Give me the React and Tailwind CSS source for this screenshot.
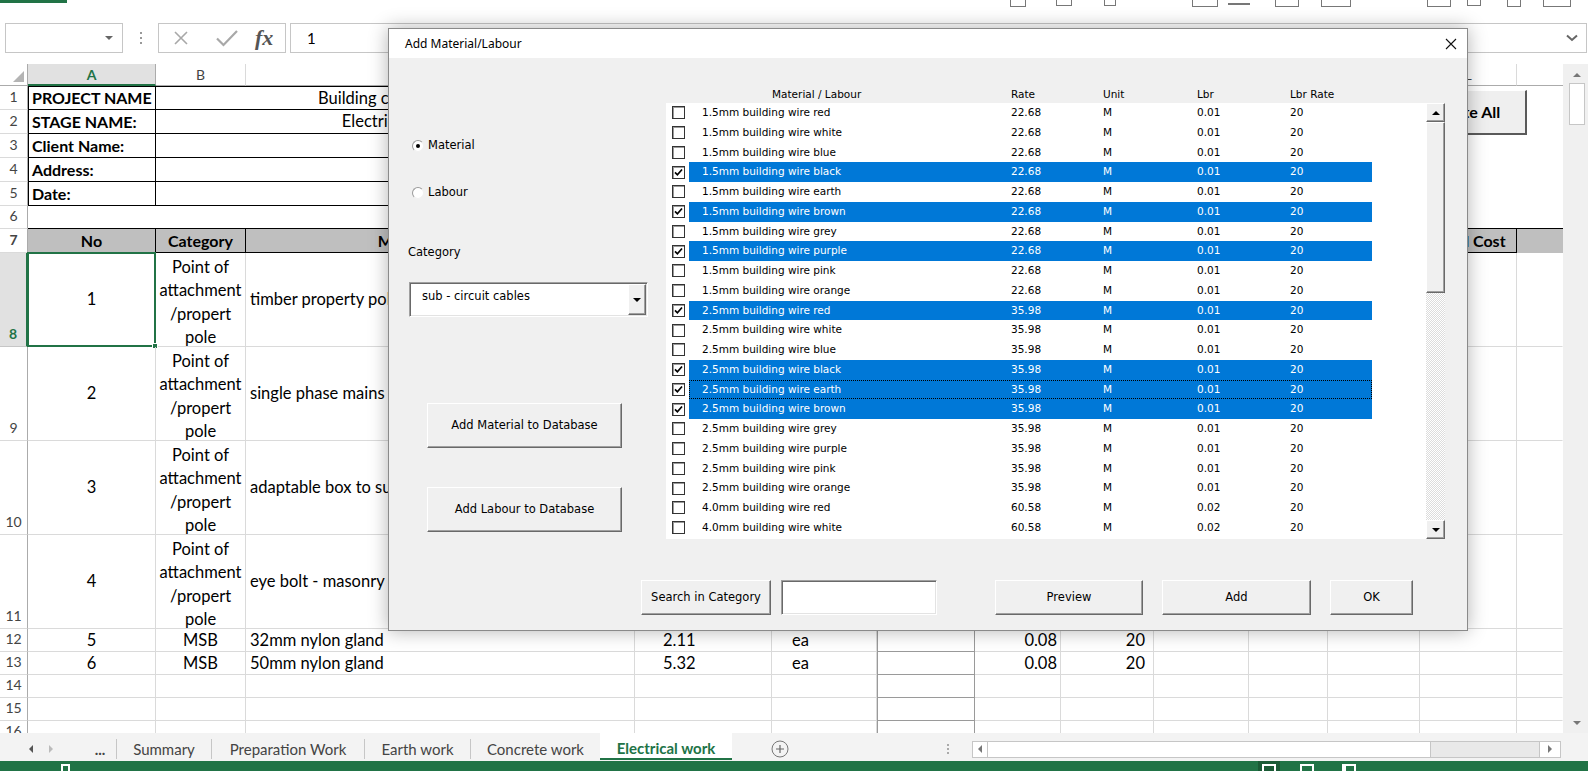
import React from "react";

// column widths of the sheet (row header, A..M)
const W = {
  hdr: "w-[28px]",
  A: "w-[128px]",
  B: "w-[90px]",
  C: "w-[389px]",
  D: "w-[137px]",
  E: "w-[105px]",
  F: "w-[98px]",
  G: "w-[86px]",
  H: "w-[93px]",
  I: "w-[95px]",
  J: "w-[79px]",
  K: "w-[92px]",
  L: "w-[97px]",
  M: "w-[46px]",
};
const TAIL = ["D", "E", "F", "G", "H", "I", "J", "K", "L", "M"];
const GRID = "border-[#dadada]";

const RAISED =
  "bg-[#f0f0f0] border border-t-white border-l-white border-r-[#696969] border-b-[#696969] shadow-[inset_-1px_-1px_0_#a0a0a0]";
const SUNKEN =
  "bg-white border border-t-[#a0a0a0] border-l-[#a0a0a0] border-r-white border-b-white shadow-[inset_1px_1px_0_#696969,inset_-1px_-1px_0_#e3e3e3]";

const TriDown = ({ c = "border-t-black" }) => (
  <span className={`h-0 w-0 border-l-[4px] border-r-[4px] border-t-[4px] border-l-transparent border-r-transparent ${c}`} />
);
const TriUp = ({ c = "border-b-black" }) => (
  <span className={`h-0 w-0 border-l-[4px] border-r-[4px] border-b-[4px] border-l-transparent border-r-transparent ${c}`} />
);
const TriLeft = ({ c = "border-r-[#666]" }) => (
  <span className={`h-0 w-0 border-t-[4px] border-b-[4px] border-r-[4px] border-t-transparent border-b-transparent ${c}`} />
);
const TriRight = ({ c = "border-l-[#666]" }) => (
  <span className={`h-0 w-0 border-t-[4px] border-b-[4px] border-l-[4px] border-t-transparent border-b-transparent ${c}`} />
);

function RH({ n, active }) {
  if (active)
    return (
      <div className="flex w-[28px] shrink-0 items-end justify-center border-r-2 border-b border-r-[#217346] border-b-[#c6c6c6] bg-[#e1e1e1] pb-[2px] text-[14px] font-bold text-[#217346]">
        {n}
      </div>
    );
  return (
    <div className="flex w-[28px] shrink-0 items-end justify-center border-r border-b border-r-[#ababab] border-b-[#dadada] bg-white pb-[2px] text-[14px] text-[#444]">
      {n}
    </div>
  );
}

function C({ w, b = GRID, cls = "", children }) {
  return <div className={`${w} shrink-0 border-r border-b ${b} ${cls}`}>{children}</div>;
}

const TOP = [
  ["1", "PROJECT NAME", "Building construction"],
  ["2", "STAGE NAME:", "Electrical work"],
  ["3", "Client Name:", ""],
  ["4", "Address:", ""],
  ["5", "Date:", ""],
];
const BIG = [
  ["8", "1", "timber property pole"],
  ["9", "2", "single phase mains connection"],
  ["10", "3", "adaptable box to suit"],
  ["11", "4", "eye bolt - masonry"],
];
const SMALL = [
  ["12", "5", "MSB", "32mm nylon gland", "2.11", "ea", "0.08", "20"],
  ["13", "6", "MSB", "50mm nylon gland", "5.32", "ea", "0.08", "20"],
  ["14"],
  ["15"],
  ["16"],
];

function Sheet() {
  return (
    <div className="relative flex w-[1563px] shrink-0 flex-col overflow-hidden text-[16.5px]">
      {/* column letters */}
      <div className="flex h-[22px] shrink-0 text-[14px] text-[#444]">
        <div className="relative w-[28px] shrink-0 border-r border-b border-[#ababab] bg-white">
          <span className="absolute right-[3px] bottom-[3px] h-0 w-0 border-b-[11px] border-l-[11px] border-b-[#b4b4b4] border-l-transparent" />
        </div>
        <div className="flex w-[128px] shrink-0 items-center justify-center border-r border-b-2 border-r-[#ababab] border-b-[#217346] bg-[#e1e1e1] font-bold text-[#217346]">
          A
        </div>
        <div className="flex w-[90px] shrink-0 items-center justify-center border-r border-b border-r-[#dadada] border-b-[#ababab]">B</div>
        <div className="flex w-[389px] shrink-0 items-center justify-center border-r border-b border-r-[#dadada] border-b-[#ababab]">C</div>
        {TAIL.map((k) => (
          <div
            key={k}
            className={`${W[k]} flex shrink-0 items-center justify-center border-b border-b-[#ababab] ${k === "M" ? "" : "border-r border-r-[#dadada]"}`}
          >
            {k === "M" ? "" : k}
          </div>
        ))}
      </div>

      {TOP.map(([n, label, val], i) => (
        <div key={n} className="flex h-[24px] shrink-0">
          <RH n={n} />
          <C w={W.A} b="border-black" cls={`flex items-center border-l pl-[3px] text-[16px] font-bold ${i === 0 ? "border-t" : ""}`}>
            {label}
          </C>
          <C w="w-[479px]" b="border-black" cls={`flex items-center justify-center whitespace-nowrap ${i === 0 ? "border-t" : ""}`}>
            {val}
          </C>
          <div className="flex-1" />
        </div>
      ))}

      <div className="flex h-[23px] shrink-0">
        <RH n="6" />
        <div className="flex-1 border-b border-black" />
      </div>

      <div className="flex h-[24px] shrink-0 text-[16px] font-bold">
        <RH n="7" />
        <C w={W.A} b="border-black" cls="flex items-center justify-center bg-[#bfbfbf]">No</C>
        <C w={W.B} b="border-black" cls="flex items-center justify-center bg-[#bfbfbf]">Category</C>
        <C w={W.C} b="border-black" cls="flex items-center justify-center bg-[#bfbfbf]">Material / Labour</C>
        {TAIL.map((k) => (
          <C
            key={k}
            w={W[k]}
            b={k === "M" ? "border-transparent" : "border-black"}
            cls={`flex items-center justify-center whitespace-nowrap bg-[#bfbfbf] ${k === "L" ? "pl-[4px]" : ""}`}
          >
            {k === "L" ? "Total Cost" : ""}
          </C>
        ))}
      </div>

      {BIG.map(([n, no, desc], i) => (
        <div key={n} className="flex h-[94px] shrink-0">
          <RH n={n} active={i === 0} />
          <C w={W.A} cls="relative flex items-center justify-center">
            {no}
            {i === 0 && (
              <div className="absolute -top-[1px] -left-[1px] h-[95px] w-[129px] border-2 border-[#217346]">
                <span className="absolute -right-[4px] -bottom-[4px] h-[6px] w-[6px] border border-white bg-[#217346]" />
              </div>
            )}
          </C>
          <C w={W.B} cls="flex flex-col items-center pt-[3px] text-center leading-[23.3px]">
            <span>Point of</span>
            <span>attachment</span>
            <span>/propert</span>
            <span>pole</span>
          </C>
          <C w={W.C} cls="flex items-center overflow-hidden whitespace-nowrap pl-[4px]">
            {desc}
          </C>
          {TAIL.map((k) => (
            <C key={k} w={W[k]} b={k === "M" ? "border-b-[#dadada] border-r-transparent" : GRID} />
          ))}
        </div>
      ))}

      {SMALL.map(([n, no, cat, desc, rate, unit, lbr, lr]) => (
        <div key={n} className="flex h-[23px] shrink-0">
          <RH n={n} />
          <C w={W.A} cls="flex items-center justify-center">{no}</C>
          <C w={W.B} cls="flex items-center justify-center">{cat}</C>
          <C w={W.C} cls="flex items-center pl-[4px]">{desc}</C>
          <C w={W.D} cls="flex items-center pl-[28px]">{rate}</C>
          <C w={W.E} cls="flex items-center pl-[20px]">{unit}</C>
          <C w={W.F} b="border-[#9a9a9a]" cls="border-l" />
          <C w={W.G} cls="flex items-center justify-end pr-[3px]">{lbr}</C>
          <C w={W.H} cls="flex items-center justify-end pr-[8px]">{lr}</C>
          {["I", "J", "K", "L", "M"].map((k) => (
            <C key={k} w={W[k]} b={k === "M" ? "border-b-[#dadada] border-r-transparent" : GRID} />
          ))}
        </div>
      ))}

      {/* form button sitting on the sheet */}
      <div className="absolute top-[26px] left-[1400px] flex h-[45px] w-[127px] items-center justify-center border border-r-2 border-b-2 border-t-white border-r-[#5a5a5a] border-b-[#5a5a5a] border-l-white bg-[#efefef] text-[16px] font-bold">
        Update All
      </div>
    </div>
  );
}

function VScroll() {
  return (
    <div className="flex w-[25px] flex-col items-center bg-[#f0f0f0] pl-[3px]">
      <div className="mt-[4px] flex h-[14px] w-[16px] items-center justify-center">
        <TriUp c="border-b-[#777]" />
      </div>
      <div className="mt-[1px] h-[42px] w-[16px] border border-[#c6c6c6] bg-white" />
      <div className="flex-1" />
      <div className="mb-[3px] flex h-[14px] w-[16px] items-center justify-center">
        <TriDown c="border-t-[#777]" />
      </div>
    </div>
  );
}

function Sep() {
  return <div className="h-[20px] w-px shrink-0 bg-[#c6c6c6]" />;
}

function Tabs() {
  return (
    <div className="flex h-[28px] items-start overflow-hidden bg-[#f3f3f3] text-[15px] text-[#444]">
      <div className="flex h-[32px] items-center">
        <div className="w-[24px] shrink-0" />
        <div className="flex w-[14px] shrink-0 justify-center">
          <TriLeft c="border-r-[#555]" />
        </div>
        <div className="w-[6px] shrink-0" />
        <div className="flex w-[14px] shrink-0 justify-center">
          <TriRight c="border-l-[#bbb]" />
        </div>
        <div className="w-[30px] shrink-0" />
        <div className="flex w-[24px] shrink-0 justify-center font-bold">...</div>
        <div className="w-[4px] shrink-0" />
        <Sep />
        <div className="flex w-[94px] shrink-0 justify-center">Summary</div>
        <Sep />
        <div className="flex w-[152px] shrink-0 justify-center">Preparation Work</div>
        <Sep />
        <div className="flex w-[105px] shrink-0 justify-center">Earth work</div>
        <Sep />
        <div className="flex w-[129px] shrink-0 justify-center">Concrete work</div>
        <div className="flex h-[27px] w-[132px] shrink-0 items-center justify-center self-start border-b-2 border-[#217346] bg-white pt-[6px] font-bold text-[#217346]">
          Electrical work
        </div>
        <div className="w-[38px] shrink-0" />
        <svg width="20" height="20" viewBox="0 0 20 20" className="shrink-0">
          <circle cx="10" cy="10" r="8" fill="none" stroke="#777" strokeWidth="1" />
          <path d="M10 6v8M6 10h8" stroke="#666" strokeWidth="1.2" />
        </svg>
        <div className="w-[153px] shrink-0" />
        <div className="flex w-[10px] shrink-0 flex-col items-center gap-[2px]">
          <span className="h-[2px] w-[2px] bg-[#aaa]" />
          <span className="h-[2px] w-[2px] bg-[#aaa]" />
          <span className="h-[2px] w-[2px] bg-[#aaa]" />
        </div>
        <div className="w-[19px] shrink-0" />
        <div className="flex h-[17px] w-[589px] shrink-0 border border-[#c6c6c6] bg-[#e9e9e9]">
          <div className="flex w-[14px] items-center justify-center bg-white">
            <TriLeft c="border-r-[#777]" />
          </div>
          <div className="w-[444px] border-x border-[#c6c6c6] bg-white" />
          <div className="flex-1" />
          <div className="flex w-[21px] items-center justify-center border-l border-[#c6c6c6] bg-white">
            <TriRight c="border-l-[#777]" />
          </div>
        </div>
      </div>
    </div>
  );
}

function StatusBar() {
  return (
    <div className="flex h-[10px] items-start overflow-hidden bg-[#217346]">
      <div className="mt-[3px] ml-[61px] h-[10px] w-[9px] border-2 border-b-0 border-white" />
      <div className="ml-[1188px] flex h-[10px] w-[22px] justify-center bg-[#1a5a35] pt-[3px]">
        <div className="h-[10px] w-[14px] border-2 border-b-0 border-white" />
      </div>
      <div className="mt-[3px] ml-[20px] h-[10px] w-[14px] border-2 border-b-0 border-white" />
      <div className="mt-[3px] ml-[28px] flex h-[10px] w-[14px] gap-[2px] border-2 border-b-0 border-white">
        <div className="h-full w-[2px] bg-white" />
      </div>
    </div>
  );
}

// bottoms of ribbon controls that peek in along the top edge
function TopStrip() {
  return (
    <div className="flex h-[18px] items-start">
      <div className="h-[3px] w-[67px] bg-[#217346]" />
      <div className="ml-[943px] h-[7px] w-[16px] border-x border-b border-[#777]" />
      <div className="ml-[30px] h-[6px] w-[16px] border-x border-b border-[#777]" />
      <div className="ml-[32px] h-[6px] w-[12px] border-x border-b border-[#777]" />
      <div className="ml-[76px] h-[7px] w-[26px] border-x border-b border-[#777]" />
      <div className="ml-[10px] h-[5px] w-[22px] border-b-2 border-[#777]" />
      <div className="ml-[25px] h-[7px] w-[24px] border-x border-b border-[#777]" />
      <div className="ml-[22px] h-[7px] w-[30px] border-x border-b border-[#777]" />
      <div className="ml-[76px] h-[7px] w-[24px] border-x border-b border-[#777]" />
      <div className="ml-[16px] h-[6px] w-[14px] border-x border-b border-[#777]" />
      <div className="ml-[26px] h-[7px] w-[14px] border-x border-b border-[#777]" />
      <div className="ml-[22px] h-[7px] w-[28px] border-x border-b border-[#777]" />
    </div>
  );
}

function FormulaBar() {
  return (
    <div className="flex h-[40px] items-center">
      <div className="ml-[5px] flex h-[30px] w-[118px] shrink-0 items-center justify-end border border-[#c6c6c6] bg-white pr-[9px]">
        <TriDown c="border-t-[#666]" />
      </div>
      <div className="flex w-[35px] shrink-0 flex-col items-center gap-[3px]">
        <span className="h-[2px] w-[2px] bg-[#999]" />
        <span className="h-[2px] w-[2px] bg-[#999]" />
        <span className="h-[2px] w-[2px] bg-[#999]" />
      </div>
      <div className="flex h-[30px] w-[128px] shrink-0 items-center border border-[#c6c6c6] bg-white">
        <svg width="16" height="16" viewBox="0 0 16 16" className="ml-[14px]">
          <path d="M2 2L14 14M14 2L2 14" stroke="#a8a8a8" strokeWidth="1.6" />
        </svg>
        <svg width="24" height="18" viewBox="0 0 24 18" className="ml-[26px]">
          <path d="M2 9.5L8.5 16L22 2" fill="none" stroke="#a8a8a8" strokeWidth="2.2" />
        </svg>
        <span className="ml-[16px] font-['Liberation_Serif',serif] text-[22px] leading-none font-bold text-[#555] italic">fx</span>
      </div>
      <div className="mr-[1px] ml-[4px] flex h-[30px] flex-1 items-center justify-between border border-[#c6c6c6] bg-white pr-[8px] pl-[16px] text-[15px]">
        <span>1</span>
        <svg width="12" height="8" viewBox="0 0 12 8">
          <path d="M1 1.5L6 6L11 1.5" fill="none" stroke="#666" strokeWidth="2" />
        </svg>
      </div>
    </div>
  );
}

const COLORS = ["red", "white", "blue", "black", "earth", "brown", "grey", "purple", "pink", "orange"];
const ITEMS = [
  ...COLORS.map((c) => ({ name: `1.5mm building wire ${c}`, rate: "22.68", lbr: "0.01" })),
  ...COLORS.map((c) => ({ name: `2.5mm building wire ${c}`, rate: "35.98", lbr: "0.01" })),
  { name: "4.0mm building wire red", rate: "60.58", lbr: "0.02" },
  { name: "4.0mm building wire white", rate: "60.58", lbr: "0.02" },
];
const SELECTED = [3, 5, 7, 10, 13, 14, 15];
const FOCUS = 14;

function CheckBox({ on }) {
  return (
    <div className="flex h-[13px] w-[13px] items-center justify-center border border-[#333] bg-white shadow-[inset_1px_1px_0_#9a9a9a]">
      {on && (
        <svg width="9" height="9" viewBox="0 0 9 9">
          <path d="M1 4.3L3.4 6.8L8 1.5" fill="none" stroke="#000" strokeWidth="1.7" />
        </svg>
      )}
    </div>
  );
}

function Radio({ on }) {
  return (
    <div className="flex h-[12px] w-[12px] items-center justify-center rounded-full border border-t-[#9a9a9a] border-r-[#f0f0f0] border-b-[#f0f0f0] border-l-[#9a9a9a] bg-white">
      {on && <div className="h-[4px] w-[4px] rounded-full bg-black" />}
    </div>
  );
}

function Dialog() {
  return (
    <div className="absolute top-[28px] left-[388px] flex h-[603px] w-[1080px] flex-col border border-[#8a8a8a] bg-[#f0f0f0] font-['DejaVu_Sans',sans-serif] text-[11.5px] text-black shadow-[0_0_18px_rgba(0,0,0,0.3)]">
      <div className="flex h-[29px] shrink-0 items-center justify-between bg-white pr-[10px] pl-[16px] font-['Noto_Sans',sans-serif] text-[12px]">
        <span>Add Material/Labour</span>
        <svg width="12" height="12" viewBox="0 0 12 12">
          <path d="M1 1L11 11M11 1L1 11" stroke="#111" strokeWidth="1.1" />
        </svg>
      </div>

      <div className="flex h-[481px] shrink-0">
        {/* left panel */}
        <div className="ml-[19px] flex w-[240px] shrink-0 flex-col">
          <div className="mt-[80px] flex h-[16px] items-center gap-[4px] pl-[4px]">
            <Radio on />
            <span>Material</span>
          </div>
          <div className="mt-[31px] flex h-[16px] items-center gap-[4px] pl-[4px]">
            <Radio />
            <span>Labour</span>
          </div>
          <div className="mt-[44px] flex h-[16px] items-center">Category</div>
          <div className={`mt-[21px] ml-[1px] flex h-[35px] w-[239px] items-stretch p-[1px] ${SUNKEN}`}>
            <div className="flex-1 pt-[4px] pl-[11px]">sub - circuit cables</div>
            <div className={`flex w-[18px] items-center justify-center ${RAISED}`}>
              <TriDown />
            </div>
          </div>
          <div className={`mt-[86px] ml-[19px] flex h-[45px] w-[195px] items-center justify-center ${RAISED}`}>
            Add Material to Database
          </div>
          <div className={`mt-[39px] ml-[19px] flex h-[45px] w-[195px] items-center justify-center ${RAISED}`}>
            Add Labour to Database
          </div>
        </div>

        {/* list */}
        <div className="ml-[18px] flex flex-col pt-[28px] text-[10.5px]">
          <div className="flex h-[17px] items-center">
            <div className="w-[23px]" />
            <div className="w-[322px] pl-[83px]">Material / Labour</div>
            <div className="w-[92px]">Rate</div>
            <div className="w-[94px]">Unit</div>
            <div className="w-[93px]">Lbr</div>
            <div>Lbr Rate</div>
          </div>
          <div className="flex h-[436px]">
            <div className="flex w-[760px] flex-col bg-white">
              {ITEMS.map((it, i) => {
                const sel = SELECTED.includes(i);
                return (
                  <div key={it.name} className="flex h-[19.75px] shrink-0 items-center">
                    <div className="flex w-[23px] items-center pl-[6px]">
                      <CheckBox on={sel} />
                    </div>
                    <div
                      className={`flex h-full w-[683px] items-center ${sel ? "bg-[#0078d7] text-white" : ""} ${
                        i === FOCUS ? "outline-1 -outline-offset-1 outline-black outline-dotted" : ""
                      }`}
                    >
                      <div className="w-[322px] pl-[13px]">{it.name}</div>
                      <div className="w-[92px]">{it.rate}</div>
                      <div className="w-[94px]">M</div>
                      <div className="w-[93px]">{it.lbr}</div>
                      <div>20</div>
                    </div>
                  </div>
                );
              })}
            </div>
            <div className="flex w-[19px] flex-col">
              <div className={`flex h-[19px] shrink-0 items-center justify-center ${RAISED}`}>
                <TriUp />
              </div>
              <div className={`h-[171px] shrink-0 ${RAISED}`} />
              <div className="flex-1 bg-[repeating-conic-gradient(#ffffff_0_25%,#dcdcdc_0_50%)] bg-[length:2px_2px]" />
              <div className={`flex h-[19px] shrink-0 items-center justify-center ${RAISED}`}>
                <TriDown />
              </div>
            </div>
          </div>
        </div>
      </div>

      <div className="mt-[41px] flex h-[35px] shrink-0">
        <div className={`ml-[252px] flex w-[130px] items-center justify-center ${RAISED}`}>Search in Category</div>
        <div className={`ml-[10px] w-[156px] ${SUNKEN}`} />
        <div className={`ml-[58px] flex w-[148px] items-center justify-center ${RAISED}`}>Preview</div>
        <div className={`ml-[19px] flex w-[149px] items-center justify-center ${RAISED}`}>Add</div>
        <div className={`ml-[19px] flex w-[83px] items-center justify-center ${RAISED}`}>OK</div>
      </div>
    </div>
  );
}

export default function App() {
  return (
    <div className="relative h-[771px] w-[1588px] overflow-hidden bg-white font-['Lato',sans-serif] text-black">
      <TopStrip />
      <FormulaBar />
      <div className="h-[6px]" />
      <div className="flex h-[669px]">
        <Sheet />
        <VScroll />
      </div>
      <Tabs />
      <StatusBar />
      <Dialog />
    </div>
  );
}
